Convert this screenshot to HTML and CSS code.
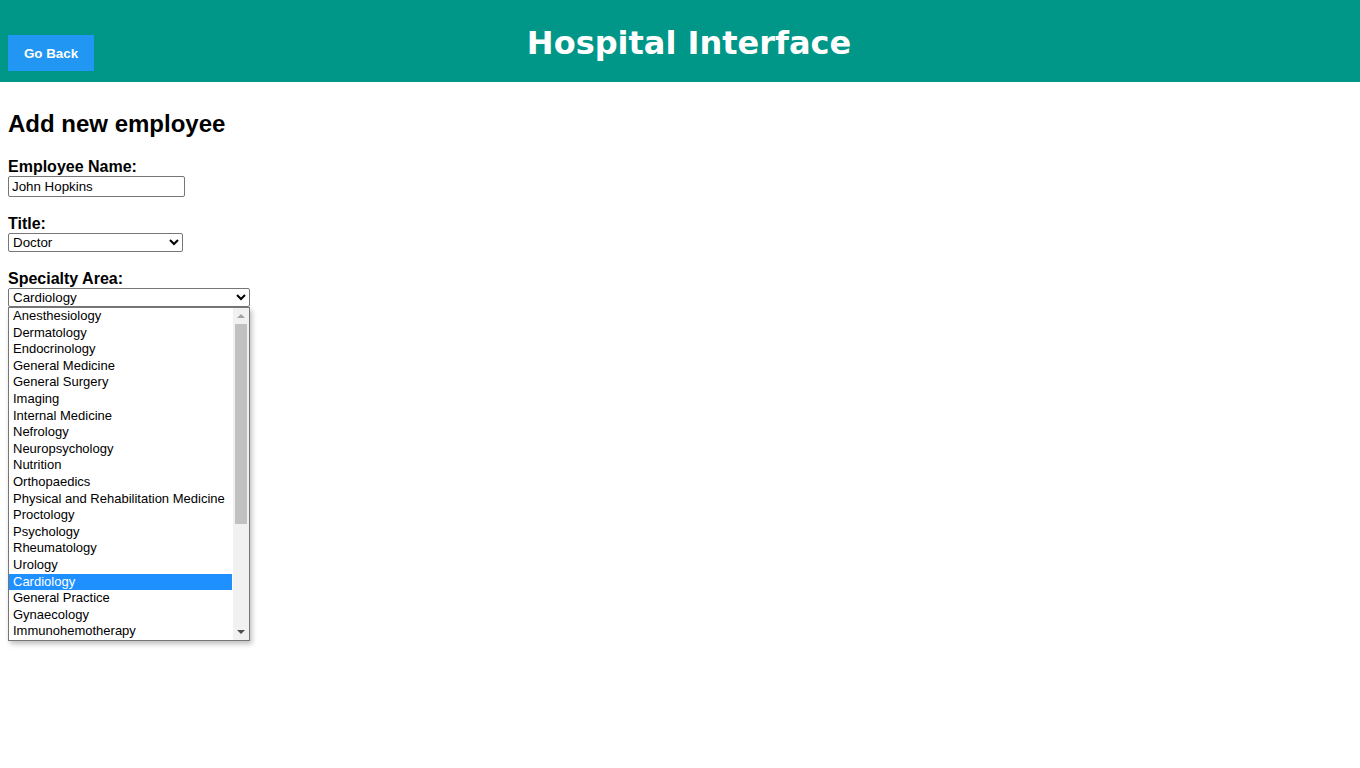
FILE: index.html
```html
<!DOCTYPE html>
<html lang="en">
<head>
    <meta charset="UTF-8">
    <meta name="viewport" content="width=device-width, initial-scale=1.0">
    <title>Hospital Interface</title>
    <link rel="stylesheet" href="styles.css">
</head>
<body>
    <header class="top-bar">
        <button type="button" class="back-btn">Go Back</button>
        <h1>Hospital Interface</h1>
    </header>

    <main class="page">
        <h2>Add new employee</h2>

        <form id="employeeForm" class="employee-form">
            <div class="form-group">
                <label for="emp-name">Employee Name:</label>
                <input type="text" id="emp-name" name="emp-name" class="name-input" value="John Hopkins">
            </div>
            <div class="form-group">
                <label for="emp-title">Title:</label>
                <select id="emp-title" name="emp-title" class="title-select">
                    <option selected>Doctor</option>
                    <option>Nurse</option>
                    <option>Technician</option>
                </select>
            </div>
            <div class="form-group specialty-group">
                <label for="emp-specialty">Specialty Area:</label>
                <select id="emp-specialty" name="emp-specialty" class="specialty-select">
                    <option selected>Cardiology</option>
                </select>

                <!-- open dropdown of the specialty select -->
                <div class="option-popup">
                    <ul class="option-list">
                        <li>Anesthesiology</li>
                        <li>Dermatology</li>
                        <li>Endocrinology</li>
                        <li>General Medicine</li>
                        <li>General Surgery</li>
                        <li>Imaging</li>
                        <li>Internal Medicine</li>
                        <li>Nefrology</li>
                        <li>Neuropsychology</li>
                        <li>Nutrition</li>
                        <li>Orthopaedics</li>
                        <li>Physical and Rehabilitation Medicine</li>
                        <li>Proctology</li>
                        <li>Psychology</li>
                        <li>Rheumatology</li>
                        <li>Urology</li>
                        <li class="active">Cardiology</li>
                        <li>General Practice</li>
                        <li>Gynaecology</li>
                        <li>Immunohemotherapy</li>
                    </ul>
                    <div class="scroll-track">
                        <div class="scroll-arrow"><span class="arrow-up"></span></div>
                        <div class="scroll-thumb"></div>
                        <div class="scroll-arrow"><span class="arrow-down"></span></div>
                    </div>
                </div>
            </div>
        </form>
    </main>
</body>
</html>
```

FILE: styles.css
```css
html,
body {
    min-height: 100vh;
}
body {
    font-family: "Liberation Sans", Arial, sans-serif;
    background-color: #ffffff;
    color: #000;
    margin: 0;
    padding: 0;
}
.top-bar {
    display: flex;
    align-items: flex-start;
    height: 82px;
    padding: 0 8px;
    background: #009688;
    box-sizing: border-box;
}
.back-btn {
    margin-top: 35px;
    height: 36px;
    padding: 0 16px;
    background: #2196f3;
    color: white;
    border: none;
    font-family: "Liberation Sans", Arial, sans-serif;
    font-size: 13.33px;
    font-weight: bold;
    cursor: pointer;
}
.top-bar h1 {
    flex: 1;
    margin: 25px 0 0;
    padding-right: 68px;
    font-family: "DejaVu Sans", Verdana, sans-serif;
    font-size: 32px;
    line-height: 37px;
    font-weight: bold;
    color: white;
    text-align: center;
}
.page {
    padding: 0 8px;
}
.page h2 {
    margin: 28px 0 20px;
    font-size: 24px;
    line-height: 28px;
    font-weight: bold;
}
.form-group {
    display: flex;
    flex-direction: column;
    align-items: flex-start;
    margin-bottom: 18px;
}
.form-group label {
    font-size: 16px;
    line-height: 18px;
    font-weight: bold;
}
.form-group input,
.form-group select {
    font-family: "Liberation Sans", Arial, sans-serif;
    font-size: 13.33px;
    color: #000;
    background: #fff;
    border: 1px solid #767676;
    border-radius: 2px;
    box-sizing: border-box;
}
.name-input {
    width: 177px;
    height: 21px;
    padding: 1px 3px;
}
.title-select {
    width: 175px;
    height: 19px;
}
.specialty-select {
    width: 242px;
    height: 19px;
}
/* the opened list sits right under its select */
.option-popup {
    width: 242px;
    height: 334px;
    display: grid;
    grid-template-columns: 1fr 16px;
    background: #fff;
    border: 1px solid #767676;
    box-sizing: border-box;
    box-shadow: 2px 3px 5px rgba(0, 0, 0, 0.25);
}
.option-list {
    list-style: none;
    margin: 0;
    padding: 0;
    font-size: 13px;
}
.option-list li {
    height: 16.6px;
    line-height: 16.6px;
    padding-left: 4px;
    margin-right: 1px;
    white-space: nowrap;
}
.option-list li.active {
    background: #1e90ff;
    color: #fff;
}
.scroll-track {
    display: grid;
    grid-template-rows: 16px 200px 1fr 16px;
    background: #f1f1f1;
}
.scroll-track .scroll-arrow:last-child {
    grid-row: 4;
}
.scroll-arrow {
    display: flex;
    align-items: center;
    justify-content: center;
}
.arrow-up {
    border-left: 4px solid transparent;
    border-right: 4px solid transparent;
    border-bottom: 4px solid #a3a3a3;
}
.arrow-down {
    border-left: 4px solid transparent;
    border-right: 4px solid transparent;
    border-top: 4px solid #505050;
}
.scroll-thumb {
    margin: 0 2px;
    background: #c1c1c1;
}
```
